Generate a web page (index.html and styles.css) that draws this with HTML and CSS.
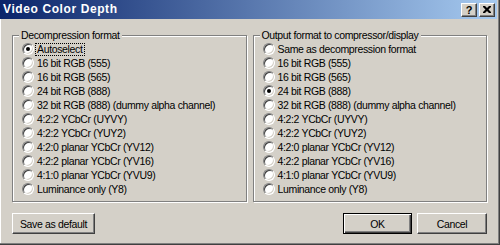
FILE: index.html
```html
<!DOCTYPE html>
<html>
<head>
<meta charset="utf-8">
<link rel="stylesheet" href="styles.css">
</head>
<body>
<div class="win">
  <div class="titlebar">
    <span class="title">Video Color Depth</span>
    <div class="tbtns">
      <span class="tbtn help">?</span>
      <span class="tbtn close"><svg width="8" height="7" viewBox="0 0 8 7"><path d="M0 0h2l2 2 2-2h2v1l-2.5 2.5L8 6v1H6L4 5 2 7H0V6l2.5-2.5L0 1z" fill="#000"/></svg></span>
    </div>
  </div>
  <div class="content">
    <div class="groups">
      <div class="group">
        <div class="legend">Decompression format</div>
        <div class="radios">
          <div class="row"><span class="radio on"></span><span class="lbl focus">Autoselect</span></div>
          <div class="row"><span class="radio"></span><span class="lbl">16 bit RGB (555)</span></div>
          <div class="row"><span class="radio"></span><span class="lbl">16 bit RGB (565)</span></div>
          <div class="row"><span class="radio"></span><span class="lbl">24 bit RGB (888)</span></div>
          <div class="row"><span class="radio"></span><span class="lbl">32 bit RGB (888) (dummy alpha channel)</span></div>
          <div class="row"><span class="radio"></span><span class="lbl">4:2:2 YCbCr (UYVY)</span></div>
          <div class="row"><span class="radio"></span><span class="lbl">4:2:2 YCbCr (YUY2)</span></div>
          <div class="row"><span class="radio"></span><span class="lbl">4:2:0 planar YCbCr (YV12)</span></div>
          <div class="row"><span class="radio"></span><span class="lbl">4:2:2 planar YCbCr (YV16)</span></div>
          <div class="row"><span class="radio"></span><span class="lbl">4:1:0 planar YCbCr (YVU9)</span></div>
          <div class="row"><span class="radio"></span><span class="lbl">Luminance only (Y8)</span></div>
        </div>
      </div>
      <div class="group">
        <div class="legend">Output format to compressor/display</div>
        <div class="radios">
          <div class="row"><span class="radio"></span><span class="lbl">Same as decompression format</span></div>
          <div class="row"><span class="radio"></span><span class="lbl">16 bit RGB (555)</span></div>
          <div class="row"><span class="radio"></span><span class="lbl">16 bit RGB (565)</span></div>
          <div class="row"><span class="radio on"></span><span class="lbl">24 bit RGB (888)</span></div>
          <div class="row"><span class="radio"></span><span class="lbl">32 bit RGB (888) (dummy alpha channel)</span></div>
          <div class="row"><span class="radio"></span><span class="lbl">4:2:2 YCbCr (UYVY)</span></div>
          <div class="row"><span class="radio"></span><span class="lbl">4:2:2 YCbCr (YUY2)</span></div>
          <div class="row"><span class="radio"></span><span class="lbl">4:2:0 planar YCbCr (YV12)</span></div>
          <div class="row"><span class="radio"></span><span class="lbl">4:2:2 planar YCbCr (YV16)</span></div>
          <div class="row"><span class="radio"></span><span class="lbl">4:1:0 planar YCbCr (YVU9)</span></div>
          <div class="row"><span class="radio"></span><span class="lbl">Luminance only (Y8)</span></div>
        </div>
      </div>
    </div>
    <div class="buttons">
      <button class="btn save">Save as default</button>
      <button class="btn ok default">OK</button>
      <button class="btn cancel">Cancel</button>
    </div>
  </div>
</div>
</body>
</html>
```
FILE: styles.css
```css
html, body {
  margin: 0;
  padding: 0;
  background: #d4d0c8;
}
body {
  width: 500px;
  height: 245px;
  overflow: hidden;
  font-family: "Liberation Sans", Arial, sans-serif;
  font-size: 10.5px;
  letter-spacing: -0.35px;
  color: #000;
}
.win {
  box-sizing: border-box;
  width: 500px;
  height: 245px;
  background: #d4d0c8;
  border-right: 1px solid #404040;
  border-bottom: 1px solid #404040;
  box-shadow: inset -1px -1px 0 #808080, inset 1px 0 0 #fff;
  display: flex;
  flex-direction: column;
}
.titlebar {
  height: 19px;
  margin-right: 2px;
  background: linear-gradient(to right, #0a246a, #a6caf0);
  display: flex;
  align-items: center;
  justify-content: space-between;
  padding: 0 2px 0 3px;
}
.title {
  color: #fff;
  font-weight: bold;
  font-size: 12px;
  letter-spacing: 0.6px;
  line-height: 19px;
}
.tbtns {
  display: flex;
  gap: 2px;
}
.tbtn {
  box-sizing: border-box;
  width: 16px;
  height: 14px;
  background: #d4d0c8;
  border: 1px solid;
  border-color: #fff #404040 #404040 #fff;
  box-shadow: inset -1px -1px 0 #808080;
  display: flex;
  align-items: center;
  justify-content: center;
}
.help {
  font-weight: bold;
  font-size: 11px;
  line-height: 12px;
  letter-spacing: 0;
}
.content {
  flex: 1;
  padding: 16px 12px 0 12px;
  display: flex;
  flex-direction: column;
}
.groups {
  display: flex;
  gap: 6px;
}
.group {
  flex: 1;
  border: 1px solid #808080;
  box-shadow: inset 1px 1px 0 #fff, 1px 1px 0 #fff;
  padding: 0 0 5px 0;
}
.legend {
  width: fit-content;
  margin: -7px 0 0 6px;
  padding: 0 2px;
  height: 13px;
  line-height: 13px;
  background: #d4d0c8;
}
.radios {
  display: flex;
  flex-direction: column;
  padding-left: 9px;
}
.row {
  height: 14px;
  display: flex;
  align-items: center;
}
.radio {
  position: relative;
  box-sizing: border-box;
  width: 12px;
  height: 12px;
  border-radius: 50%;
  border: 1px solid;
  border-color: #808080 #fff #fff #808080;
  background: #fff;
  box-shadow: inset 1px 1px 0 #404040, inset -1px -1px 0 #d4d0c8;
  margin-right: 1px;
  flex: none;
}
.radio.on::after {
  content: "";
  position: absolute;
  left: 3px;
  top: 3px;
  width: 4px;
  height: 4px;
  border-radius: 50%;
  background: #000;
}
.lbl {
  border: 1px solid transparent;
  padding: 0 1px;
  line-height: 11px;
  white-space: nowrap;
}
.lbl.focus {
  border: 1px dotted #000;
}
.buttons {
  display: flex;
  gap: 5px;
  margin-top: 11px;
}
.btn {
  box-sizing: border-box;
  height: 21px;
  padding: 0;
  font-family: "Liberation Sans", Arial, sans-serif;
  font-size: 10.5px;
  letter-spacing: -0.35px;
  color: #000;
  background: #d4d0c8;
  border: 1px solid;
  border-color: #fff #404040 #404040 #fff;
  box-shadow: inset -1px -1px 0 #808080;
  border-radius: 0;
}
.save { width: 83px; }
.ok { width: 69px; margin-left: auto; }
.cancel { width: 70px; }
.btn.default {
  border: 1px solid #000;
  box-shadow: inset 1px 1px 0 #fff, inset -1px -1px 0 #404040, inset -2px -2px 0 #808080;
}
```
